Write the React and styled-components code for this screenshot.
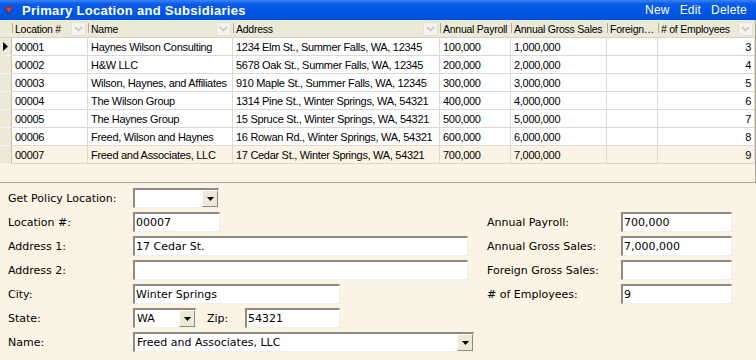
import React from 'react';
import styled, { createGlobalStyle } from 'styled-components';

const Global = createGlobalStyle`
  html, body { margin: 0; padding: 0; background: #FBF3E4; }
  body { width: 756px; height: 360px; overflow: hidden; }
`;

const Page = styled.div`
  width: 756px;
  height: 360px;
  background: #FBF3E4;
  display: flex;
  flex-direction: column;
`;

const TitleBar = styled.div`
  height: 20px;
  flex: none;
  display: flex;
  align-items: center;
  box-sizing: border-box;
  padding: 0 9px 0 5px;
  background: linear-gradient(#3b82f4, #0a5ce8 20%, #0054e3 70%, #0050d8);
  color: #fff;
`;

const Caret = styled.svg`
  width: 8px;
  height: 8px;
  flex: none;
  margin-top: -1px;
`;

const Title = styled.span`
  font: bold 13px "Liberation Sans", Arial, sans-serif;
  letter-spacing: 0.3px;
  margin-left: 9px;
`;

const Actions = styled.div`
  margin-left: auto;
  display: flex;
  gap: 10px;
  font: 12px "Liberation Sans", Arial, sans-serif;
  letter-spacing: 0.2px;
`;

const GridBox = styled.div`
  flex: none;
  height: 163px;
  box-sizing: border-box;
  border-right: 1px solid #ACA899;
  border-bottom: 1px solid #ACA899;
  display: flex;
  flex-direction: column;
  overflow: hidden;
`;

const Table = styled.table`
  border-collapse: separate;
  border-spacing: 0;
  table-layout: fixed;
  width: 755px;
  font: 11px "Liberation Sans", Arial, sans-serif;
  letter-spacing: -0.3px;
  color: #000;
`;

const Th = styled.th`
  height: 18px;
  padding: 0;
  background: #ECE9D8;
  font-weight: normal;
  font-size: 10.5px;
  letter-spacing: -0.25px;
  text-align: left;
  position: relative;
  border-bottom: 1px solid #D6D2C2;
  box-sizing: border-box;
`;

const HeadInner = styled.div`
  display: flex;
  align-items: center;
  height: 17px;
  padding-left: 3px;
  padding-right: 2px;
  white-space: nowrap;
  overflow: hidden;
  &::before {
    content: '';
    position: absolute;
    left: 0;
    top: 3px;
    bottom: 4px;
    width: 1px;
    background: ${p => (p.$first ? 'transparent' : '#ACA899')};
  }
`;

const HeadLabel = styled.span`
  overflow: hidden;
  text-overflow: ${p => (p.$ellipsis ? 'ellipsis' : 'clip')};
  flex: 1;
  min-width: 0;
`;

const SortBox = styled.span`
  flex: none;
  width: 13px;
  height: 12px;
  border: 1px solid #E4E2D8;
  background: #F4F3EE;
  display: flex;
  align-items: center;
  justify-content: center;
  margin-left: 2px;
`;

const Tr = styled.tr`
  background: ${p => (p.$current ? '#FBF3E4' : '#fff')};
`;

const Td = styled.td`
  height: 17px;
  padding: 0 3px;
  border-right: 1px solid #DCD9D0;
  border-bottom: 1px solid #DCD9D0;
  white-space: nowrap;
  overflow: hidden;
  text-align: ${p => (p.$right ? 'right' : 'left')};
`;

const SelCell = styled.td`
  height: 17px;
  padding: 0;
  background: #ECE9D8;
  border-right: 1px solid #C4C0B0;
  border-bottom: 1px solid #F4F2EA;
`;

const SelInner = styled.div`
  display: flex;
  align-items: center;
  padding-left: 3px;
`;

const GridFill = styled.div`
  flex: 1;
  background: #FBF3E4;
`;

const Form = styled.div`
  display: grid;
  grid-template-columns: 125px 354px 134px 110px;
  grid-auto-rows: 20px;
  row-gap: 4px;
  padding: 5px 0 0 8px;
  font: 11px "DejaVu Sans", Verdana, sans-serif;
  color: #000;
`;

const Label = styled.div`
  display: flex;
  align-items: center;
  grid-column: ${p => p.$col};
  grid-row: ${p => p.$row};
  white-space: nowrap;
`;

const Field = styled.div`
  grid-column: ${p => p.$col};
  grid-row: ${p => p.$row};
  display: flex;
  align-items: center;
`;

const Input = styled.div`
  width: ${p => p.$w}px;
  height: 20px;
  box-sizing: border-box;
  border-top: 2px solid #8D8B84;
  border-left: 2px solid #8D8B84;
  border-right: 1px solid #F2EFE8;
  border-bottom: 1px solid #F2EFE8;
  background: #fff;
  padding-left: 1px;
  display: flex;
  align-items: center;
  white-space: nowrap;
  overflow: hidden;
  flex: none;
`;

const SelectBox = styled(Input)`
  padding-right: 0;
`;

const SelectText = styled.span`
  flex: 1;
  min-width: 0;
  padding-left: 1px;
`;

const DropBtn = styled.span`
  flex: none;
  width: 16px;
  height: 17px;
  box-sizing: border-box;
  background: #ECE9D8;
  border-top: 1px solid #fff;
  border-left: 1px solid #fff;
  border-right: 1px solid #8D8B84;
  border-bottom: 1px solid #8D8B84;
  display: flex;
  align-items: center;
  justify-content: center;
`;

const ZipLabel = styled.span`
  margin-left: 11px;
  width: 38px;
`;

const columns = [
  { key: 'loc', label: 'Location #', w: 76, sort: true },
  { key: 'name', label: 'Name', w: 145, sort: true },
  { key: 'addr', label: 'Address', w: 207, sort: true },
  { key: 'pay', label: 'Annual Payroll', w: 71 },
  { key: 'gross', label: 'Annual Gross Sales', w: 96 },
  { key: 'foreign', label: 'Foreign Gross Sales', w: 51, ellipsis: true },
  { key: 'emp', label: '# of Employees', w: 97, sort: true, right: true },
];

const rows = [
  ['00001', 'Haynes Wilson Consulting', '1234 Elm St., Summer Falls, WA, 12345', '100,000', '1,000,000', '', '3'],
  ['00002', 'H&W LLC', '5678 Oak St., Summer Falls, WA, 12345', '200,000', '2,000,000', '', '4'],
  ['00003', 'Wilson, Haynes, and Affiliates', '910 Maple St., Summer Falls, WA, 12345', '300,000', '3,000,000', '', '5'],
  ['00004', 'The Wilson Group', '1314 Pine St., Winter Springs, WA, 54321', '400,000', '4,000,000', '', '6'],
  ['00005', 'The Haynes Group', '15 Spruce St., Winter Springs, WA, 54321', '500,000', '5,000,000', '', '7'],
  ['00006', 'Freed, Wilson and Haynes', '16 Rowan Rd., Winter Springs, WA, 54321', '600,000', '6,000,000', '', '8'],
  ['00007', 'Freed and Associates, LLC', '17 Cedar St., Winter Springs, WA, 54321', '700,000', '7,000,000', '', '9'],
];

const Chevron = () => (
  <svg width="9" height="6" viewBox="0 0 9 6">
    <path d="M1 1 L4.5 4.5 L8 1" fill="none" stroke="#C4C4C0" strokeWidth="1.5" />
  </svg>
);

const DownTri = () => (
  <svg width="7" height="4" viewBox="0 0 7 4">
    <path d="M0 0 H7 L3.5 4 Z" fill="#000" />
  </svg>
);

const RowArrow = () => (
  <svg width="5" height="9" viewBox="0 0 5 9">
    <path d="M0 0 L5 4.5 L0 9 Z" fill="#000" />
  </svg>
);

const Select = ({ w, value }) => (
  <SelectBox as="div" $w={w}>
    <SelectText>{value}</SelectText>
    <DropBtn>
      <DownTri />
    </DropBtn>
  </SelectBox>
);

export default function App() {
  return (
    <Page>
      <Global />
      <TitleBar>
        <Caret viewBox="0 0 8 8">
          <path d="M0.5 1 H7.5 L4 7.5 Z" fill="#E0453A" stroke="#8A1E14" strokeWidth="0.8" />
        </Caret>
        <Title>Primary Location and Subsidiaries</Title>
        <Actions>
          <span>New</span>
          <span>Edit</span>
          <span>Delete</span>
        </Actions>
      </TitleBar>
      <GridBox>
        <Table>
          <colgroup>
            <col style={{ width: 12 }} />
            {columns.map(c => (
              <col key={c.key} style={{ width: c.w }} />
            ))}
          </colgroup>
          <thead>
            <tr>
              <Th>
                <HeadInner $first />
              </Th>
              {columns.map(c => (
                <Th key={c.key}>
                  <HeadInner>
                    <HeadLabel $ellipsis={c.ellipsis}>{c.label}</HeadLabel>
                    {c.sort && (
                      <SortBox>
                        <Chevron />
                      </SortBox>
                    )}
                  </HeadInner>
                </Th>
              ))}
            </tr>
          </thead>
          <tbody>
            {rows.map((r, i) => (
              <Tr key={r[0]} $current={i === rows.length - 1}>
                <SelCell>
                  <SelInner>{i === 0 && <RowArrow />}</SelInner>
                </SelCell>
                {r.map((v, j) => (
                  <Td key={j} $right={columns[j].right}>
                    {v}
                  </Td>
                ))}
              </Tr>
            ))}
          </tbody>
        </Table>
        <GridFill />
      </GridBox>
      <Form>
        <Label $col={1} $row={1}>Get Policy Location:</Label>
        <Field $col={2} $row={1}>
          <Select w={86} value="" />
        </Field>

        <Label $col={1} $row={2}>Location #:</Label>
        <Field $col={2} $row={2}>
          <Input $w={87}>00007</Input>
        </Field>

        <Label $col={1} $row={3}>Address 1:</Label>
        <Field $col={2} $row={3}>
          <Input $w={335}>17 Cedar St.</Input>
        </Field>

        <Label $col={1} $row={4}>Address 2:</Label>
        <Field $col={2} $row={4}>
          <Input $w={335} />
        </Field>

        <Label $col={1} $row={5}>City:</Label>
        <Field $col={2} $row={5}>
          <Input $w={207}>Winter Springs</Input>
        </Field>

        <Label $col={1} $row={6}>State:</Label>
        <Field $col={2} $row={6}>
          <Select w={63} value="WA" />
          <ZipLabel>Zip:</ZipLabel>
          <Input $w={95}>54321</Input>
        </Field>

        <Label $col={1} $row={7}>Name:</Label>
        <Field $col={2} $row={7}>
          <Select w={341} value="Freed and Associates, LLC" />
        </Field>

        <Label $col={3} $row={2}>Annual Payroll:</Label>
        <Field $col={4} $row={2}>
          <Input $w={111}>700,000</Input>
        </Field>

        <Label $col={3} $row={3}>Annual Gross Sales:</Label>
        <Field $col={4} $row={3}>
          <Input $w={111}>7,000,000</Input>
        </Field>

        <Label $col={3} $row={4}>Foreign Gross Sales:</Label>
        <Field $col={4} $row={4}>
          <Input $w={111} />
        </Field>

        <Label $col={3} $row={5}># of Employees:</Label>
        <Field $col={4} $row={5}>
          <Input $w={111}>9</Input>
        </Field>
      </Form>
    </Page>
  );
}
